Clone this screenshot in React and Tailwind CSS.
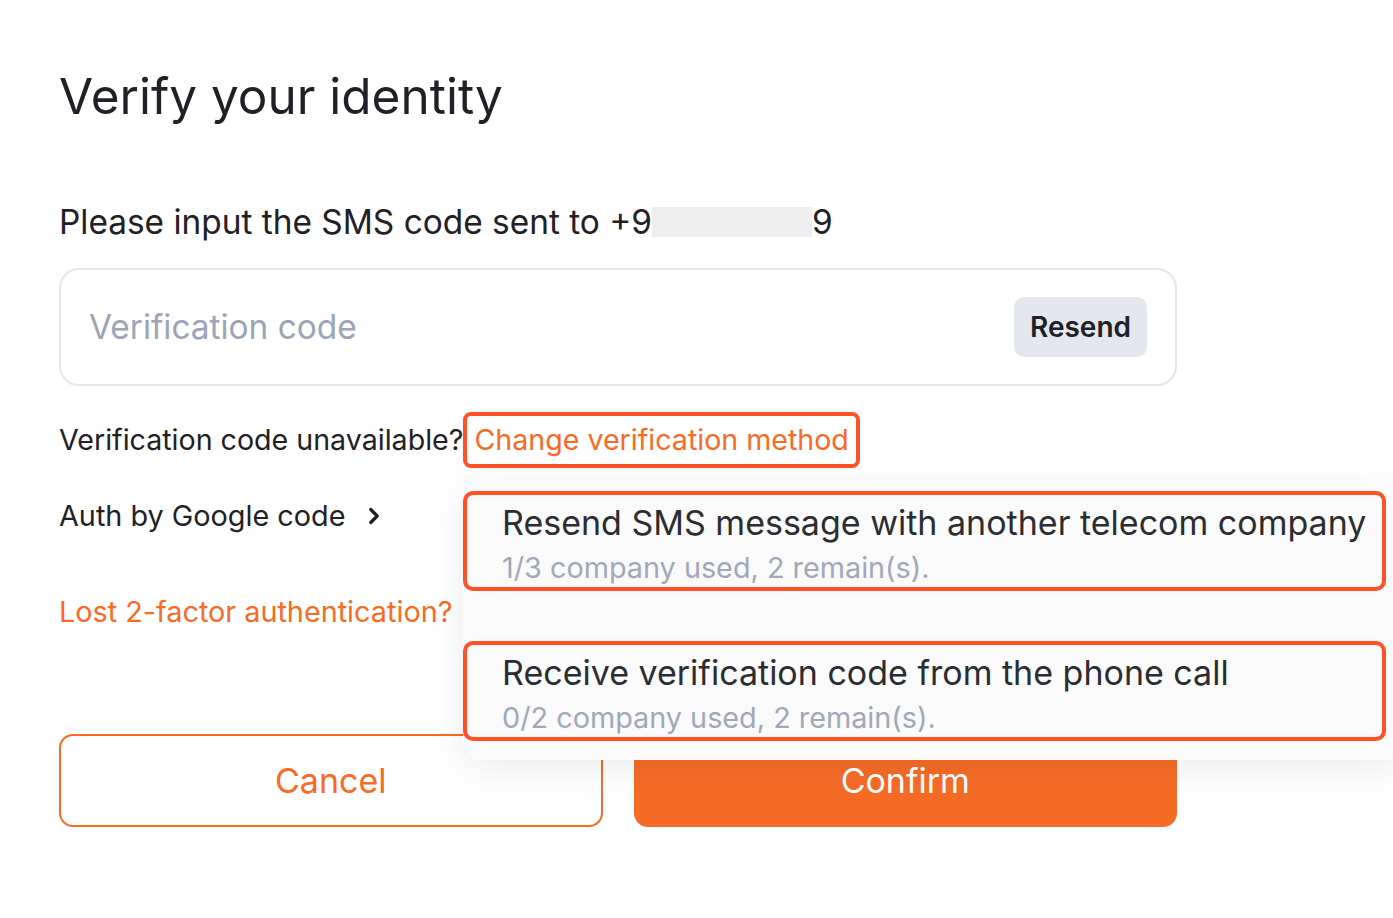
import { ChevronRight } from "lucide-react";

const font = { fontFamily: "Inter, 'Noto Sans', sans-serif" };

function MethodItem({ title, usage }) {
  return (
    <div className="rounded-[10px] border-4 border-[#ff5128] pl-[35px] pt-[6px] h-[100px] w-[923px]">
      <p className="text-[34px] leading-[44px] text-[#2b2d33]">{title}</p>
      <p className="mt-[3px] text-[28.8px] leading-[40px] text-[#a1a8bb]">{usage}</p>
    </div>
  );
}

export default function App() {
  return (
    <div className="relative min-h-[918px] bg-white overflow-hidden" style={font}>
      <div className="w-[1118px] ml-[59px] pt-[64px] flex flex-col">
        <h1 className="text-[49.5px] leading-[64px] text-[#1f2126]">Verify your identity</h1>

        <p className="mt-[72px] text-[33.4px] leading-[44px] text-[#1f2126] flex items-center">
          Please input the SMS code sent to +9
          <span className="inline-block w-[160px] h-[30px] bg-[#eeeeee]" />
          9
        </p>

        <div className="mt-[24px] h-[118px] rounded-[20px] border-2 border-[#e3e6ed] flex items-center justify-between pl-[28px] pr-[28px]">
          <span className="text-[33.4px] text-[#9ca4b8]">Verification code</span>
          <button className="h-[60px] px-[16px] rounded-[10px] bg-[#e4e7ee] text-[28px] font-semibold text-[#1f2126]">
            Resend
          </button>
        </div>

        <div className="mt-[26px] flex items-center text-[28.6px] leading-[56px] text-[#1f2126]">
          <span>Verification code unavailable?</span>
          <span className="px-[7px] rounded-[8px] border-4 border-[#ff5128] text-[#f96a24] leading-[48px]">
            Change verification method
          </span>
        </div>

        <div className="mt-[26px] flex items-center gap-[16px] text-[28.8px] leading-[44px] text-[#1f2126]">
          <span>Auth by Google code</span>
          <ChevronRight size={26} strokeWidth={3} className="text-[#1f2126]" />
        </div>

        <p className="mt-[52px] text-[28.8px] leading-[44px] text-[#f96a24]">Lost 2-factor authentication?</p>

        <div className="mt-[100px] grid grid-cols-2 gap-[31px]">
          <button className="h-[93px] rounded-[14px] border-2 border-[#f96a24] text-[34px] text-[#f96a24]">
            Cancel
          </button>
          <button className="h-[93px] rounded-[14px] bg-[#f66c27] text-[34px] text-white">
            Confirm
          </button>
        </div>
      </div>

      <div className="absolute left-[463px] top-[484px] w-[940px] h-[276px] rounded-[18px] bg-[#fafafa] shadow-[0_8px_40px_rgba(0,0,0,0.08)] flex flex-col gap-[50px] pt-[7px]">
        <MethodItem
          title="Resend SMS message with another telecom company"
          usage="1/3 company used, 2 remain(s)."
        />
        <MethodItem
          title="Receive verification code from the phone call"
          usage="0/2 company used, 2 remain(s)."
        />
      </div>
    </div>
  );
}
